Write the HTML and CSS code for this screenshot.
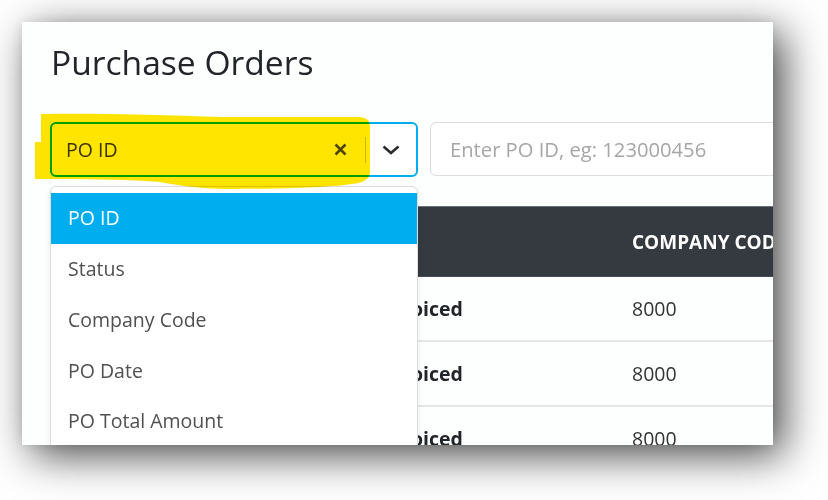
FILE: index.html
```html
<!DOCTYPE html>
<html lang="en">
<head>
<meta charset="utf-8">
<title>Purchase Orders</title>
<link rel="stylesheet" href="styles.css">
</head>
<body>
  <div class="window">
    <h1 class="title">Purchase Orders</h1>

    <div class="search-row">
      <div class="select">
        <div class="select-value">PO ID</div>
        <span class="clear">
          <svg width="13" height="13" viewBox="0 0 13 13"><path d="M1.5 1.5 L11.5 11.5 M11.5 1.5 L1.5 11.5" stroke="#4d4d4d" stroke-width="2.6" stroke-linecap="butt" fill="none"/></svg>
        </span>
        <span class="sep"></span>
        <span class="caret">
          <svg width="18" height="10" viewBox="0 0 18 10"><path d="M1.5 1.5 L9 8 L16.5 1.5" stroke="#2b2b2b" stroke-width="2.6" fill="none"/></svg>
        </span>
        <ul class="menu">
          <li class="menu-item active">PO ID</li>
          <li class="menu-item">Status</li>
          <li class="menu-item">Company Code</li>
          <li class="menu-item">PO Date</li>
          <li class="menu-item">PO Total Amount</li>
          <li class="menu-item">Vendor</li>
        </ul>
      </div>
      <input class="search" type="text" placeholder="Enter PO ID, eg: 123000456">
    </div>

    <table class="orders">
      <colgroup>
        <col class="c-id"><col class="c-status"><col class="c-code"><col class="c-date">
      </colgroup>
      <thead>
        <tr><th>PO ID</th><th>Status</th><th>Company Code</th><th>PO Date</th></tr>
      </thead>
      <tbody>
        <tr><td>4500012345</td><td class="bold">Fully Invoiced</td><td>8000</td><td>2020-05-12</td></tr>
        <tr><td>4500012346</td><td class="bold">Fully Invoiced</td><td>8000</td><td>2020-05-12</td></tr>
        <tr><td>4500012347</td><td class="bold">Fully Invoiced</td><td>8000</td><td>2020-05-13</td></tr>
      </tbody>
    </table>

    <svg class="highlight" width="751" height="423" viewBox="0 0 751 423">
      <path d="M19 92 C70 91 140 93 200 95 L338 95 Q348 96 348 104 L348 150 Q348 160 330 162 C300 166 250 167 208 167 C175 167 150 162 138 160 C100 157 60 157 13 157 L13 120 L19 120 Z" fill="#ffe500"/>
    </svg>
  </div>
</body>
</html>
```

FILE: styles.css
```css
html, body {
  margin: 0;
  padding: 0;
  background: #ffffff;
}

body {
  min-height: 500px;
  padding-top: 22px;
  box-sizing: border-box;
  font-family: "Open Sans", "Liberation Sans", sans-serif;
  font-size: 19.5px;
  color: #333333;
}

.window {
  position: relative;
  margin: 0 0 0 22px;
  width: 751px;
  height: 423px;
  box-sizing: border-box;
  padding: 20px 0 0 28px;
  background: #fdfefe;
  overflow: hidden;
  box-shadow: 10px 10px 40px rgba(0, 0, 0, 0.72), 0 0 10px rgba(0, 0, 0, 0.08);
}

.title {
  margin: 0 0 0 1px;
  font-size: 33.6px;
  font-weight: 400;
  line-height: 1.2;
  color: #212529;
}

.search-row {
  display: flex;
  gap: 12px;
  margin-top: 40px;
}

.select {
  position: relative;
  flex: none;
  width: 368px;
  height: 55px;
  box-sizing: border-box;
  border: 2px solid #00aeef;
  border-radius: 6px;
  background: #ffffff;
  display: flex;
  align-items: center;
}

.select-value {
  flex: 1;
  padding-left: 14px;
  color: #3a3a3a;
}

.clear {
  width: 36px;
  display: flex;
  justify-content: center;
  align-items: center;
}

.sep {
  width: 1px;
  height: 26px;
  margin-left: 7px;
  background: #cccccc;
}

.caret {
  width: 50px;
  display: flex;
  justify-content: center;
  align-items: center;
  padding-top: 1px;
}

.menu {
  position: absolute;
  top: 62px;
  left: -2px;
  width: 368px;
  box-sizing: border-box;
  margin: 0;
  padding: 6px 0 0;
  list-style: none;
  background: #ffffff;
  border: 1px solid #dddddd;
  border-radius: 6px;
  box-shadow: 0 2px 6px rgba(0, 0, 0, 0.08);
  z-index: 5;
}

.menu-item {
  height: 50.75px;
  line-height: 50.75px;
  padding-left: 17px;
  color: #505050;
}

.menu-item.active {
  background: #00aeef;
  color: #ffffff;
}

.search {
  flex: none;
  width: 420px;
  height: 54px;
  box-sizing: border-box;
  border: 1px solid #dcdcdc;
  border-radius: 6px;
  padding: 0 0 0 19px;
  font-family: inherit;
  font-size: 20.2px;
  background: #ffffff;
  color: #333333;
  outline: none;
}

.search::placeholder {
  color: #a6a6a6;
}

.orders {
  margin-top: 29px;
  width: 1100px;
  table-layout: fixed;
  border-collapse: collapse;
}

.c-id { width: 262px; }
.c-status { width: 303px; }
.c-code { width: 260px; }
.c-date { width: 275px; }

.orders th {
  height: 70px;
  box-sizing: border-box;
  padding: 0 0 0 17px;
  background: #343a40;
  border-top: 1px solid #6b7177;
  border-bottom: 1px solid #454d55;
  color: #ffffff;
  font-size: 19px;
  font-weight: 700;
  text-transform: uppercase;
  text-align: left;
  vertical-align: middle;
  white-space: nowrap;
}

.orders td {
  height: 63px;
  padding: 0 0 0 17px;
  border-bottom: 2px solid #e6e6e6;
  color: #333333;
  vertical-align: middle;
  white-space: nowrap;
}

.orders td.bold {
  font-weight: 700;
  color: #212529;
}

.highlight {
  position: absolute;
  left: 0;
  top: 0;
  z-index: 10;
  mix-blend-mode: multiply;
  pointer-events: none;
}
```
